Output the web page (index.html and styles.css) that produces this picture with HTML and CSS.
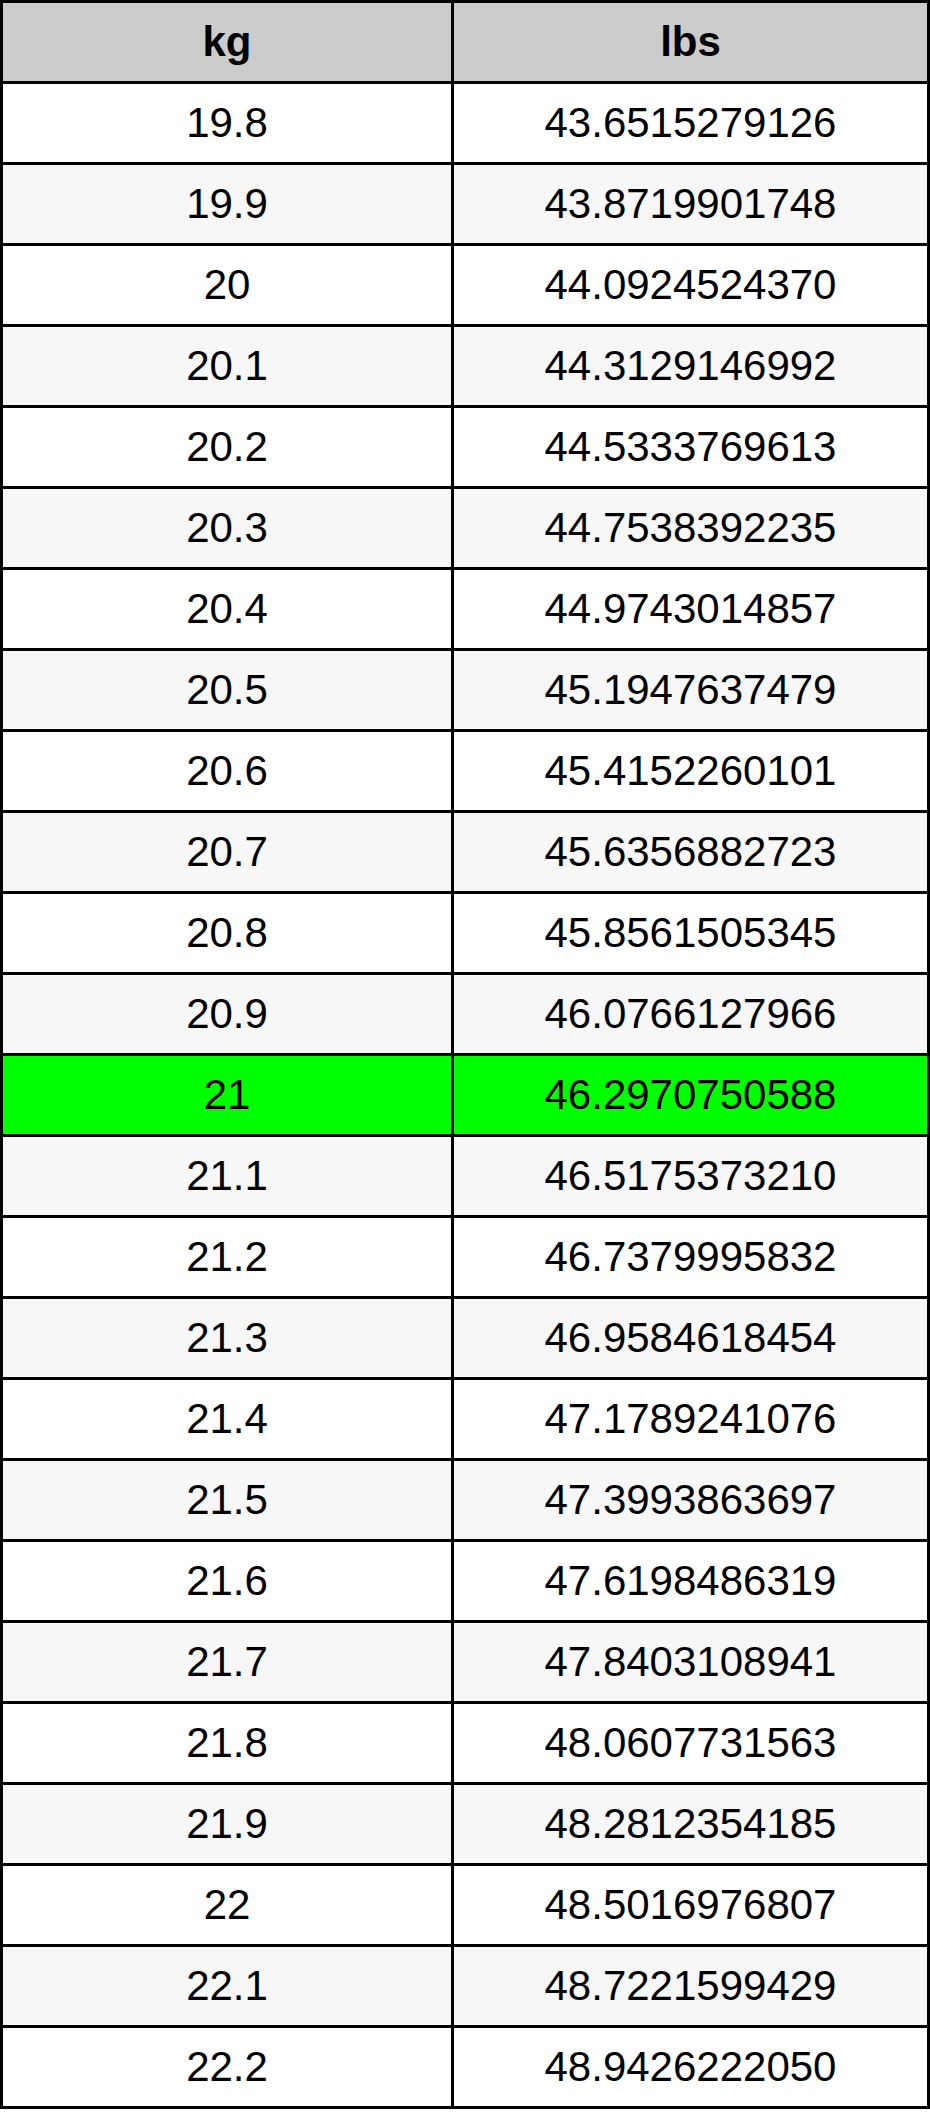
FILE: index.html
```html
<!DOCTYPE html>
<html>
<head>
<meta charset="utf-8">
<link rel="stylesheet" href="styles.css">
</head>
<body>
<table class="conv">
<colgroup><col class="c1"><col class="c2"></colgroup>
<thead><tr><th>kg</th><th>lbs</th></tr></thead>
<tbody>
<tr><td>19.8</td><td>43.6515279126</td></tr>
<tr><td>19.9</td><td>43.8719901748</td></tr>
<tr><td>20</td><td>44.0924524370</td></tr>
<tr><td>20.1</td><td>44.3129146992</td></tr>
<tr><td>20.2</td><td>44.5333769613</td></tr>
<tr><td>20.3</td><td>44.7538392235</td></tr>
<tr><td>20.4</td><td>44.9743014857</td></tr>
<tr><td>20.5</td><td>45.1947637479</td></tr>
<tr><td>20.6</td><td>45.4152260101</td></tr>
<tr><td>20.7</td><td>45.6356882723</td></tr>
<tr><td>20.8</td><td>45.8561505345</td></tr>
<tr><td>20.9</td><td>46.0766127966</td></tr>
<tr class="hl"><td>21</td><td>46.2970750588</td></tr>
<tr><td>21.1</td><td>46.5175373210</td></tr>
<tr><td>21.2</td><td>46.7379995832</td></tr>
<tr><td>21.3</td><td>46.9584618454</td></tr>
<tr><td>21.4</td><td>47.1789241076</td></tr>
<tr><td>21.5</td><td>47.3993863697</td></tr>
<tr><td>21.6</td><td>47.6198486319</td></tr>
<tr><td>21.7</td><td>47.8403108941</td></tr>
<tr><td>21.8</td><td>48.0607731563</td></tr>
<tr><td>21.9</td><td>48.2812354185</td></tr>
<tr><td>22</td><td>48.5016976807</td></tr>
<tr><td>22.1</td><td>48.7221599429</td></tr>
<tr><td>22.2</td><td>48.9426222050</td></tr>
</tbody>
</table>
</body>
</html>
```
FILE: styles.css
```css
html, body {
  margin: 0;
  padding: 0;
  background: #ffffff;
}
.conv {
  border-collapse: collapse;
  table-layout: fixed;
  width: 930px;
  font-family: "Liberation Sans", Arial, sans-serif;
  font-size: 42px;
  color: #000;
}
.c1 { width: 451px; }
.c2 { width: 476px; }
.conv th, .conv td {
  border: 3px solid #000;
  height: 78px;
  padding: 0;
  text-align: center;
  vertical-align: middle;
  line-height: 1;
}
.conv th {
  background: #cccccc;
  font-weight: bold;
}
.conv tbody tr:nth-child(odd) td { background: #ffffff; }
.conv tbody tr:nth-child(even) td { background: #f7f7f7; }
.conv tbody tr.hl td { background: #00ff00; }
```
